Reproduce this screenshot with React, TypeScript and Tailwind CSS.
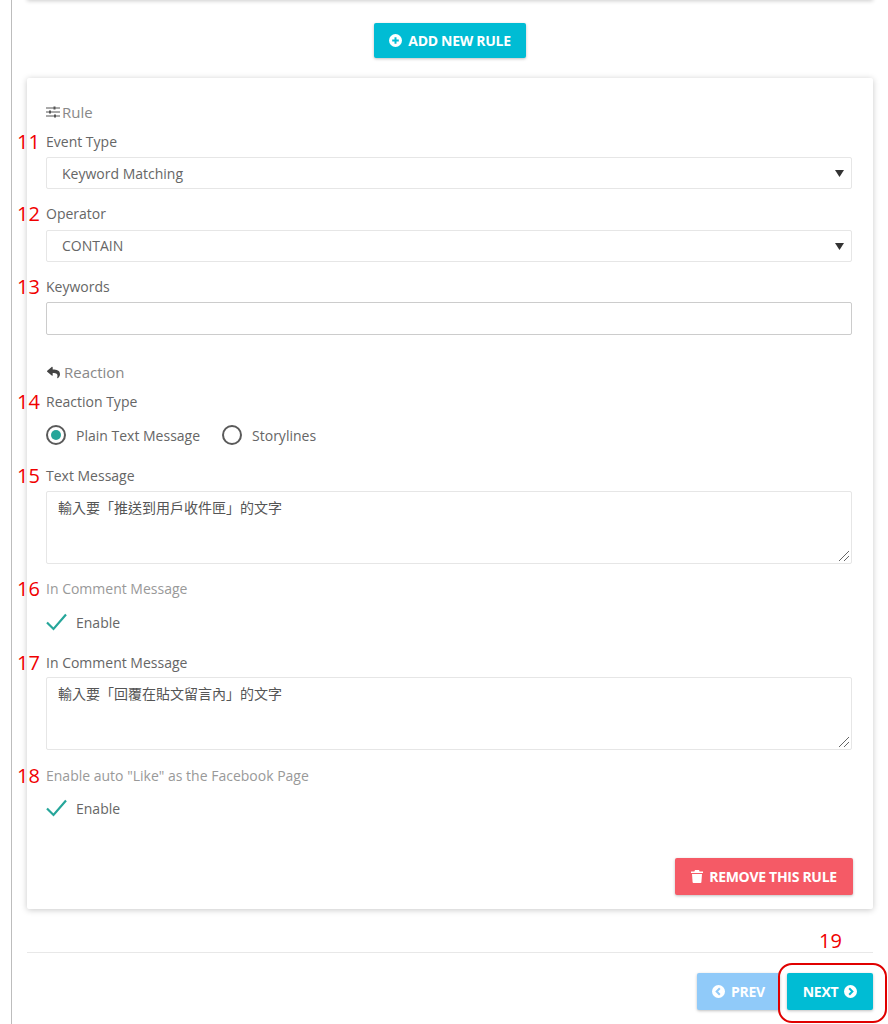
import type { ReactNode } from 'react'

const font = { fontFamily: '"Open Sans", "Noto Sans CJK TC", sans-serif' }

function Num({ children }: { children: ReactNode }) {
  return (
    <span className="absolute left-[-29px] top-1/2 -translate-y-1/2 text-[20px] leading-none text-[#f00000]">
      {children}
    </span>
  )
}

function Label({ num, children, muted, className }: { num: string; children: ReactNode; muted?: boolean; className?: string }) {
  return (
    <div className={`relative h-[18px] text-[14px] leading-[18px] ${muted ? 'text-[#999999]' : 'text-[#666666]'} ${className ?? ''}`}>
      <Num>{num}</Num>
      {children}
    </div>
  )
}

function SelectBox({ value, className, textClass }: { value: string; className?: string; textClass?: string }) {
  return (
    <div className={`flex h-[32px] items-center justify-between rounded-[2px] border border-[#e6e6e6] bg-white pl-[15px] pr-[7px] text-[14px] text-[#666666] ${className ?? ''}`}>
      <span className={textClass}>{value}</span>
      <svg width="9" height="7" viewBox="0 0 9 7"><path d="M0 0h9L4.500 7z" fill="#333333" /></svg>
    </div>
  )
}

function TextBox({ value, className }: { value: string; className?: string }) {
  return (
    <div className={`relative h-[73px] rounded-[2px] border border-[#e6e6e6] bg-white px-[11px] py-[6px] text-[14px] leading-[20px] text-[#555555] ${className ?? ''}`}>
      {value}
      <svg className="absolute bottom-[1px] right-[1px]" width="12" height="12" viewBox="0 0 12 12">
        <path d="M11 1L1 11M11 6L6 11" stroke="#666666" strokeWidth="1" />
      </svg>
    </div>
  )
}

function Enable({ className }: { className?: string }) {
  return (
    <div className={`flex h-[20px] items-center text-[14px] text-[#666666] ${className ?? ''}`}>
      <svg width="21" height="18" viewBox="0 0 21 18" fill="none" className="mr-[9px]">
        <path d="M1 9.500L7.500 16L20 1.500" stroke="#26a69a" strokeWidth="2.200" />
      </svg>
      Enable
    </div>
  )
}

function CircleIcon({ type }: { type: 'plus' | 'left' | 'right' }) {
  return (
    <svg width="13" height="13" viewBox="0 0 13 13" className="shrink-0">
      <circle cx="6.500" cy="6.500" r="6.500" fill="#ffffff" />
      {type === 'plus' && <path d="M6.500 3.200v6.600M3.200 6.500h6.600" stroke="#00bcd4" strokeWidth="2" />}
      {type === 'left' && <path d="M7.800 3.200L4.600 6.500l3.200 3.300" stroke="#90caf9" strokeWidth="2" fill="none" />}
      {type === 'right' && <path d="M5.200 3.200l3.200 3.300-3.200 3.300" stroke="#00bcd4" strokeWidth="2" fill="none" />}
    </svg>
  )
}

function Btn({ children, className }: { children: ReactNode; className?: string }) {
  return (
    <div className={`flex items-center justify-center gap-[6px] rounded-[2px] text-[14px] font-bold tracking-[-0.3px] text-white shadow-[0_1px_3px_rgba(0,0,0,0.25)] ${className ?? ''}`}>
      {children}
    </div>
  )
}

export default function App() {
  return (
    <div style={font} className="relative h-[1024px] w-[888px] overflow-hidden bg-white">
      <div className="ml-[11px] h-[1034px] w-[862px] border-l border-[#bdbdbd] pl-[15px]">
        {/* end of the card above */}
        <div className="-mt-[10px] h-[10px] bg-white shadow-[0_1px_4px_rgba(0,0,0,0.2)]" />

        <div className="flex justify-center pt-[23px]">
          <Btn className="h-[35px] w-[152px] bg-[#00bcd4]">
            <CircleIcon type="plus" />
            ADD NEW RULE
          </Btn>
        </div>

        <div className="mt-[20px] h-[831px] rounded-[2px] bg-white pl-[19px] pr-[21px] pt-[25px] shadow-[0_1px_6px_rgba(0,0,0,0.22)]">
          <div className="flex h-[18px] items-center gap-[2px] text-[15px] text-[#888888]">
            <svg width="14" height="12" viewBox="0 0 14 12" fill="none" stroke="#555555">
              <path d="M0 2h14M0 6h14M0 10h14" />
              <path d="M8.500 .5v3M4 4.500v3M9 8.500v3" strokeWidth="2" />
            </svg>
            Rule
          </div>

          <Label num="11" className="mt-[12px]">Event Type</Label>
          <SelectBox value="Keyword Matching" className="mt-[6px]" />

          <Label num="12" className="mt-[16px]">Operator</Label>
          <SelectBox value="CONTAIN" className="mt-[7px]" textClass="-mt-[2px]" />

          <Label num="13" className="mt-[16px]">Keywords</Label>
          <div className="mt-[6px] h-[33px] rounded-[2px] border border-[#cccccc] bg-white" />

          <div className="mt-[28px] flex h-[18px] items-center gap-[3px] text-[15px] text-[#888888]">
            <svg width="15" height="13" viewBox="0 0 512 512" fill="#444444">
              <path d="M8.300 189.800L184.300 37.800C199.700 24.500 224 35.300 224 56v80.100c160.600 1.800 288 34 288 186.300 0 61.500-39.600 122.400-83.400 154.200-13.700 9.900-33.200-2.500-28.100-18.600 45.400-145.200-21.500-183.700-176.500-186V360c0 20.700-24.300 31.500-39.700 18.200l-176-152c-11.100-9.600-11.100-26.800 0-36.400z" />
            </svg>
            Reaction
          </div>

          <Label num="14" className="mt-[12px]">Reaction Type</Label>

          <div className="mt-[13px] flex h-[22px] items-center text-[14px] text-[#666666]">
            <span className="mr-[10px] flex h-[20px] w-[20px] items-center justify-center rounded-full border-2 border-[#5a5a5a]">
              <span className="h-[10px] w-[10px] rounded-full bg-[#26a69a]" />
            </span>
            Plain Text Message
            <span className="ml-[22px] mr-[10px] h-[20px] w-[20px] rounded-full border-2 border-[#5a5a5a]" />
            Storylines
          </div>

          <Label num="15" className="mt-[21px]">Text Message</Label>
          <TextBox value="輸入要「推送到用戶收件匣」的文字" className="mt-[6px]" />

          <Label num="16" muted className="mt-[16px]">In Comment Message</Label>
          <Enable className="mt-[14px]" />

          <Label num="17" className="mt-[22px]">In Comment Message</Label>
          <TextBox value="輸入要「回覆在貼文留言內」的文字" className="mt-[5px]" />

          <Label num="18" muted className="mt-[17px]">Enable auto "Like" as the Facebook Page</Label>
          <Enable className="mt-[13px]" />

          <div className="-mr-[1px] mt-[40px] flex justify-end">
            <Btn className="h-[37px] w-[178px] bg-[#f55a66]">
              <svg width="12" height="13" viewBox="0 0 12 13" fill="#ffffff">
                <path d="M4 0h4l.6 1.500H12V3H0V1.500h3.400zM1 4h10l-.6 8.200c0 .4-.4.800-.9.800H2.500c-.5 0-.9-.4-.9-.8z" />
              </svg>
              REMOVE THIS RULE
            </Btn>
          </div>
        </div>

        <div className="mt-[43px] border-t border-[#e8e8e8]" />

        <div className="mt-[20px] flex justify-end gap-[7px]">
          <Btn className="h-[37px] w-[83px] bg-[#90caf9]">
            <CircleIcon type="left" />
            PREV
          </Btn>
          <Btn className="h-[37px] w-[86px] bg-[#00bcd4]">
            NEXT
            <CircleIcon type="right" />
          </Btn>
        </div>
      </div>

      {/* annotation over the screenshot */}
      <span className="absolute left-[819px] top-[929px] text-[20px] leading-[24px] text-[#f00000]">19</span>
      <div className="absolute left-[778px] top-[963px] h-[60px] w-[109px] rounded-[14px] border-2 border-[#e00000]" />
    </div>
  )
}
